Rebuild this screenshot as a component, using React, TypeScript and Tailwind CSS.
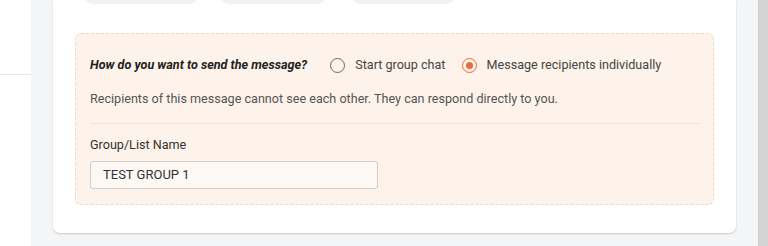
import React from "react";

export default function App() {
  return (
    <div
      className="w-[768px] h-[246px] flex bg-[#f4f5f7] overflow-hidden"
      style={{ fontFamily: "Roboto, 'Liberation Sans', sans-serif" }}
    >
      <div className="w-[31px] bg-white shrink-0">
        <div className="h-[75px] border-b border-[#e6e8eb]" />
      </div>
      <div className="flex-1 pl-[22px] pr-[22px]">
        <div className="h-[233px] bg-white rounded-b-[7px] shadow-[0_1px_2px_rgba(0,0,0,0.18)] px-[22px] flex flex-col">
          <div className="flex h-[4px] pl-[7px] gap-[18px]">
            <div className="w-[118px] h-[24px] -mt-[20px] rounded-full bg-[#f0f1f2]" />
            <div className="w-[110px] h-[24px] -mt-[20px] rounded-full bg-[#f0f1f2]" />
            <div className="w-[107px] h-[24px] -mt-[20px] rounded-full bg-[#f0f1f2] ml-[4px]" />
          </div>
          <div className="mt-[29px] h-[172px] rounded-[6px] border border-dashed border-[#f6d9bb] bg-[#fdf3ea] pl-[14px] pr-[12px] pt-[21px]">
            <div className="flex items-center h-[20px] text-[12.6px]">
              <span className="font-bold italic text-[#222]">How do you want to send the message?</span>
              <span className="ml-[23px] w-[15px] h-[15px] rounded-full border-[1.5px] border-[#6b6b6b] bg-transparent" />
              <span className="ml-[10px] text-[#444]">Start group chat</span>
              <span className="ml-[16px] w-[15px] h-[15px] rounded-full border-[1.5px] border-[#f26a3b] flex items-center justify-center">
                <span className="w-[7px] h-[7px] rounded-full bg-[#f26a3b]" />
              </span>
              <span className="ml-[10px] text-[#444]">Message recipients individually</span>
            </div>
            <div className="mt-[14px] h-[20px] flex items-center text-[12.6px] text-[#555]">
              Recipients of this message cannot see each other. They can respond directly to you.
            </div>
            <div className="mt-[14px] border-t border-[#f1e4d6]" />
            <div className="mt-[11px] h-[20px] flex items-center text-[12.6px] text-[#333]">
              Group/List Name
            </div>
            <div className="mt-[6px] w-[288px] h-[28px] rounded-[3px] border border-[#d2ccc5] bg-[#fdf8f3] flex items-center pl-[12px] text-[13px] text-[#333]">
              TEST GROUP 1
            </div>
          </div>
        </div>
      </div>
      <div className="w-[10px] bg-[#d4d4d4] shrink-0" />
    </div>
  );
}
